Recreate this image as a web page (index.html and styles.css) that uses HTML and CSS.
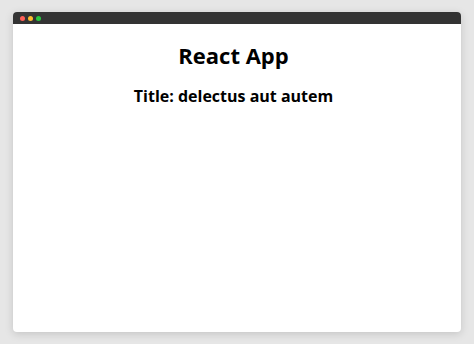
FILE: index.html
```html
<!DOCTYPE html>
<html>
<head>
<meta charset="utf-8">
<link rel="stylesheet" href="styles.css">
</head>
<body>
<div class="window">
  <div class="titlebar">
    <span class="dot red"></span>
    <span class="dot yellow"></span>
    <span class="dot green"></span>
  </div>
  <div class="content">
    <h1 class="app-title">React App</h1>
    <h2 class="item-title">Title: delectus aut autem</h2>
  </div>
</div>
</body>
</html>
```
FILE: styles.css
```css
html, body {
  margin: 0;
  padding: 0;
}
body {
  width: 474px;
  height: 344px;
  background: #e6e6e6;
  padding: 12px 13px 12px 13px;
  box-sizing: border-box;
  font-family: "Open Sans", "Noto Sans", sans-serif;
}
.window {
  height: 320px;
  background: #fff;
  border-radius: 4px;
  overflow: hidden;
  box-shadow: 0 2px 8px rgba(0,0,0,0.15);
  display: flex;
  flex-direction: column;
}
.titlebar {
  height: 12px;
  background: #333333;
  display: flex;
  align-items: center;
  gap: 3px;
  padding-left: 7px;
  flex-shrink: 0;
}
.dot {
  width: 5px;
  height: 5px;
  border-radius: 50%;
}
.red { background: #ff5f57; }
.yellow { background: #febc2e; }
.green { background: #28c840; }
.content {
  text-align: center;
  color: #000;
  padding-right: 7px;
}
.app-title {
  margin: 16px 0 0;
  font-size: 22px;
  font-weight: 700;
  line-height: 30px;
}
.item-title {
  margin: 15px 0 0;
  font-size: 16px;
  font-weight: 700;
  line-height: 22px;
}
```
